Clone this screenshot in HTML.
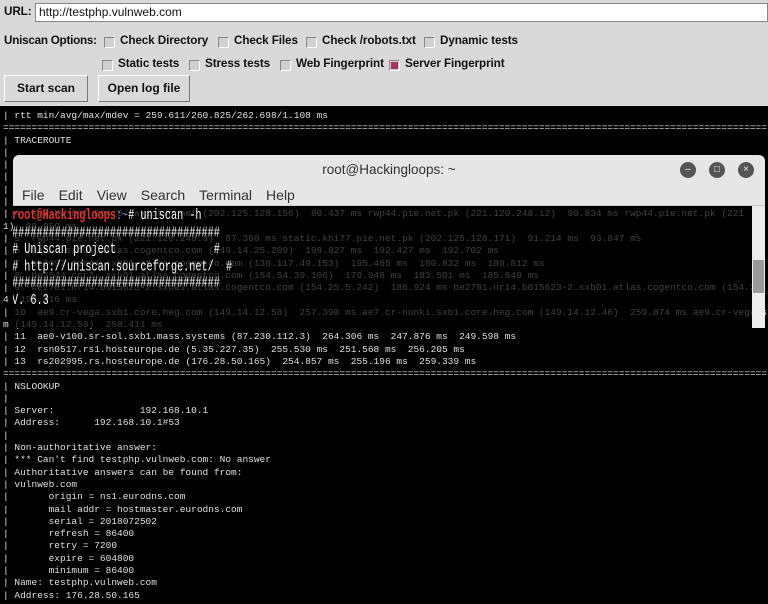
<!DOCTYPE html>
<html><head><meta charset="utf-8"><style>
*{margin:0;padding:0;box-sizing:border-box}
body{width:768px;height:604px;overflow:hidden;background:#d9d9d9;font-family:"Liberation Sans",sans-serif;position:relative}
.lbl{position:absolute;font-size:11.7px;font-weight:bold;color:#111;letter-spacing:-0.1px}
.cb{position:absolute;width:11px;height:11px;border:1px solid #888;border-right-color:#fff;border-bottom-color:#fff;background:#d0d0d0}
.cb.on::after{content:"";position:absolute;left:1px;top:1px;width:7px;height:7px;background:#b03060}
.btn{position:absolute;height:27px;background:#d9d9d9;border:1px solid #fff;border-right-color:#777;border-bottom-color:#777;font-size:12px;font-weight:bold;text-align:center;line-height:25px;color:#111}
#out{position:absolute;left:0;top:106px;width:768px;height:498px;background:#000;overflow:hidden}
#out pre{position:absolute;left:3px;top:4px;font-family:"Liberation Mono",monospace;font-size:9.5px;line-height:12.3px;color:#e0e0e0;white-space:pre}
#term{position:absolute;left:13px;top:155px;width:752px;height:173px;border-radius:6px 6px 0 0;overflow:hidden}
#tb{height:51px;background:#e6e6e6;position:relative;border-bottom:1px solid #ccc}
#tb .t{position:absolute;top:7px;left:0;width:100%;text-align:center;font-size:13.5px;color:#333}
#tb .m{position:absolute;top:32px;left:9px;font-size:14px;color:#333}
#tb .m span{margin-right:14px}
.wb{position:absolute;top:7px;width:16px;height:16px;border-radius:50%;background:#555;color:#eee;font-size:10px;line-height:16px;text-align:center}
#tc{position:absolute;top:51px;left:0;width:752px;height:122px;background:rgba(0,0,0,0.72)}
#tc pre{position:absolute;left:-1px;top:3px;font-family:"Liberation Mono",monospace;font-size:10.2px;line-height:11.6px;color:#fff;white-space:pre;transform:scaleY(1.46);transform-origin:0 0}
#sb{position:absolute;right:0;top:0;width:13px;height:122px;background:#ececec}
#sb .th{position:absolute;left:1px;top:54px;width:11px;height:33px;background:#9a9a9a}
</style></head><body>
<div class="lbl" style="left:4px;top:5px">URL:</div>
<div style="position:absolute;left:35px;top:3px;width:733px;height:19px;background:#fff;border:1px solid #888;font-size:12px;line-height:17px;padding-left:3px;color:#111">http://testphp.vulnweb.com</div>
<div class="lbl" style="left:4px;top:34px;letter-spacing:-0.25px">Uniscan Options:</div>
<div class="cb" style="left:104px;top:37px"></div><div class="lbl" style="left:120px;top:34px">Check Directory</div>
<div class="cb" style="left:218px;top:37px"></div><div class="lbl" style="left:234px;top:34px">Check Files</div>
<div class="cb" style="left:306px;top:37px"></div><div class="lbl" style="left:322px;top:34px">Check /robots.txt</div>
<div class="cb" style="left:424px;top:37px"></div><div class="lbl" style="left:440px;top:34px">Dynamic tests</div>
<div class="cb" style="left:102px;top:60px"></div><div class="lbl" style="left:118px;top:57px">Static tests</div>
<div class="cb" style="left:189px;top:60px"></div><div class="lbl" style="left:205px;top:57px">Stress tests</div>
<div class="cb" style="left:280px;top:60px"></div><div class="lbl" style="left:296px;top:57px">Web Fingerprint</div>
<div class="cb on" style="left:389px;top:60px"></div><div class="lbl" style="left:405px;top:57px">Server Fingerprint</div>
<div class="btn" style="left:4px;top:75px;width:84px">Start scan</div>
<div class="btn" style="left:98px;top:75px;width:92px">Open log file</div>
<div id="out"><pre>| rtt min/avg/max/mdev = 259.611/260.825/262.698/1.108 ms
======================================================================================================================================
| TRACEROUTE
|
|
|
|
|
| 4  khi-NW-QAT-D04.9.Pakistan.net (202.125.128.156)  80.437 ms rwp44.pie.net.pk (221.120.248.12)  90.834 ms rwp44.pie.net.pk (221
1)  88.950 ms
| 5  rwp44.pie.net.pk (221.120.248.3)  87.360 ms static.khi77.pie.net.pk (202.125.128.171)  91.214 ms  93.847 ms
| 6  be2...sxb01.atlas.cogentco.com (149.14.25.209)  198.827 ms  192.427 ms  192.702 ms
| 7  be3092.ccr41.sxb01.atlas.cogentco.com (130.117.49.153)  195.465 ms  180.832 ms  180.812 ms
| 8  be3544.ccr2..sxb01.atlas.cogentco.com (154.54.39.106)  179.948 ms  183.501 ms  185.840 ms
| 9  be2781.nr14.b015623-2.sxb01.atlas.cogentco.com (154.25.5.242)  186.924 ms be2781.nr14.b015623-2.sxb01.atlas.cogentco.com (154.2
4  193.416 ms
| 10  ae9.cr-vega.sxb1.core.heg.com (149.14.12.58)  257.390 ms ae7.cr-nunki.sxb1.core.heg.com (149.14.12.46)  259.874 ms ae9.cr-vega.s
m (149.14.12.58)  258.411 ms
| 11  ae0-v100.sr-sol.sxb1.mass.systems (87.230.112.3)  264.306 ms  247.876 ms  249.598 ms
| 12  rsn0517.rs1.hosteurope.de (5.35.227.35)  255.530 ms  251.568 ms  256.205 ms
| 13  rs202995.rs.hosteurope.de (176.28.50.165)  254.857 ms  255.196 ms  259.339 ms
======================================================================================================================================
| NSLOOKUP
|
| Server:               192.168.10.1
| Address:      192.168.10.1#53
|
| Non-authoritative answer:
| *** Can't find testphp.vulnweb.com: No answer
| Authoritative answers can be found from:
| vulnweb.com
|       origin = ns1.eurodns.com
|       mail addr = hostmaster.eurodns.com
|       serial = 2018072502
|       refresh = 86400
|       retry = 7200
|       expire = 604800
|       minimum = 86400
| Name: testphp.vulnweb.com
| Address: 176.28.50.165</pre></div>
<div id="term">
<div id="tb"><div class="t">root@Hackingloops: ~</div>
<div class="m"><span>File</span><span>Edit</span><span>View</span><span>Search</span><span>Terminal</span><span>Help</span></div>
<div class="wb" style="left:667px">&#8211;</div><div class="wb" style="left:696px">&#9633;</div><div class="wb" style="left:725px">&#215;</div>
</div>
<div id="tc"><pre><span style="color:#e8322f;font-weight:bold">root@Hackingloops</span><span style="color:#6a8fd8">:~</span># uniscan -h
##################################
# Uniscan project                #
# http://uniscan.sourceforge.net/  #
##################################
V. 6.3</pre>
<div id="sb"><div class="th"></div></div></div>
</div>
</body></html>
